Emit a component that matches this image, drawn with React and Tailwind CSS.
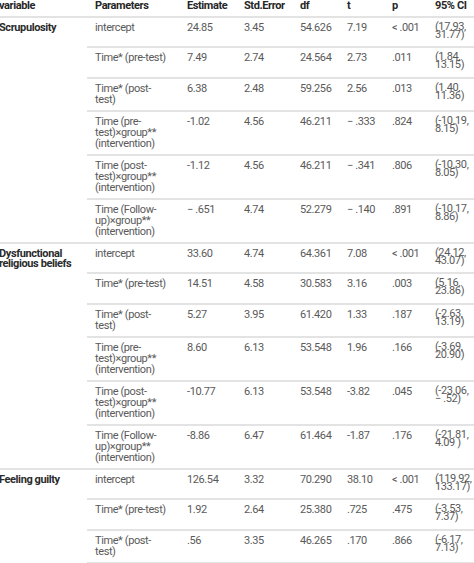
const groups = [
  {
    name: 'Scrupulosity',
    rows: [
      ['intercept', '24.85', '3.45', '54.626', '7.19', '< .001', '(17.93, 31.77)'],
      ['Time* (pre-test)', '7.49', '2.74', '24.564', '2.73', '.011', '(1.84, 13.15)'],
      ['Time* (post-test)', '6.38', '2.48', '59.256', '2.56', '.013', '(1.40, 11.36)'],
      ['Time (pre-test)×group** (intervention)', '-1.02', '4.56', '46.211', '− .333', '.824', '(-10.19, 8.15)'],
      ['Time (post-test)×group** (intervention)', '-1.12', '4.56', '46.211', '− .341', '.806', '(-10.30, 8.05)'],
      ['Time (Follow-up)×group** (intervention)', '− .651', '4.74', '52.279', '− .140', '.891', '(-10.17, 8.86)'],
    ],
  },
  {
    name: 'Dysfunctional religious beliefs',
    rows: [
      ['intercept', '33.60', '4.74', '64.361', '7.08', '< .001', '(24.12, 43.07)'],
      ['Time* (pre-test)', '14.51', '4.58', '30.583', '3.16', '.003', '(5.16, 23.86)'],
      ['Time* (post-test)', '5.27', '3.95', '61.420', '1.33', '.187', '(-2.63, 13.19)'],
      ['Time (pre-test)×group** (intervention)', '8.60', '6.13', '53.548', '1.96', '.166', '(-3.69, 20.90)'],
      ['Time (post-test)×group** (intervention)', '-10.77', '6.13', '53.548', '-3.82', '.045', '(-23.06, −\u00a0.52)'],
      ['Time (Follow-up)×group** (intervention)', '-8.86', '6.47', '61.464', '-1.87', '.176', '(-21.81, 4.09\u00a0)'],
    ],
  },
  {
    name: 'Feeling guilty',
    rows: [
      ['intercept', '126.54', '3.32', '70.290', '38.10', '< .001', '(119.92, 133.17)'],
      ['Time* (pre-test)', '1.92', '2.64', '25.380', '.725', '.475', '(-3.53, 7.37)'],
      ['Time* (post-test)', '.56', '3.35', '46.265', '.170', '.866', '(-6.17, 7.13)'],
      ['Time (pre-test)×group** (intervention)', '-1.64', '4.70', '46.265', '− .349', '.729', '(-11.10, 7.82)'],
    ],
  },
];

const headers = ['variable', 'Parameters', 'Estimate', 'Std.Error', 'df', 't', 'p', '95% CI'];
const widths = ['w-[96px]', 'w-[92px]', 'w-[57px]', 'w-[56px]', 'w-[47px]', 'w-[45px]', 'w-[43px]', 'w-[56px]'];

const base = 'h-[30.5px] border-b-2 border-[#e3e3e3] pl-2 pt-[4px] pb-[5px] align-top text-[#5a5a5a]';

export default function App() {
  return (
    <div
      className="w-[474px] h-[563px] overflow-hidden bg-white text-[11px] tracking-[-0.4px]"
      style={{ fontFamily: 'Roboto, "Liberation Sans", sans-serif' }}
    >
      <table className="-ml-[9px] w-[492px] table-fixed border-collapse text-left">
        <colgroup>
          {widths.map((w, i) => (
            <col key={i} className={w} />
          ))}
        </colgroup>
        <thead>
          <tr>
            {headers.map((h) => (
              <th
                key={h}
                className="border-b-2 border-[#e3e3e3] pl-2 pr-1 pt-[1px] pb-[4px] align-top font-bold leading-[10.5px] text-[#262626]"
              >
                {h}
              </th>
            ))}
          </tr>
        </thead>
        <tbody>
          {groups.map((g) =>
            g.rows.map((row, ri) => (
              <tr key={g.name + ri}>
                {ri === 0 && (
                  <td
                    rowSpan={g.rows.length}
                    className="border-b-2 border-[#e3e3e3] pl-2 pr-1 pt-[5px] align-top font-bold leading-[10px] text-[#2b2b2b]"
                  >
                    {g.name}
                  </td>
                )}
                {row.map((cell, ci) => (
                  <td
                    key={ci}
                    className={
                      ci === 6
                        ? base + ' pr-1 !pt-[5px] leading-[8px]'
                        : ci === 0
                        ? base + ' pr-2 leading-[11px]'
                        : base + ' pr-1 leading-[11px] whitespace-nowrap'
                    }
                  >
                    {cell}
                  </td>
                ))}
              </tr>
            ))
          )}
        </tbody>
      </table>
    </div>
  );
}
